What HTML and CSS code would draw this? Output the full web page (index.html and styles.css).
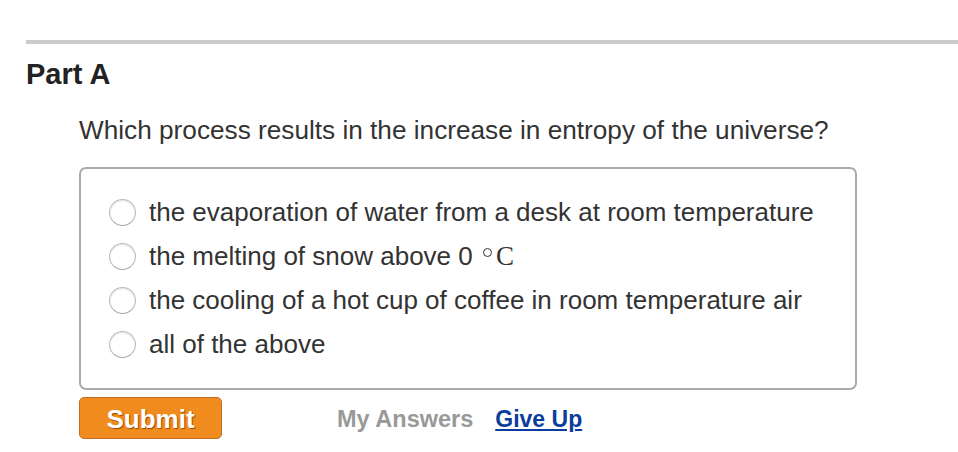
FILE: index.html
```html
<!DOCTYPE html>
<html lang="en">
  <head>
    <meta charset="UTF-8" />
    <meta name="viewport" content="width=device-width, initial-scale=1.0" />
    <title>Part A</title>
    <link rel="stylesheet" href="styles.css">
  </head>
  <body>
    <div class="part">
      <h2 class="part-title">Part A</h2>
      <div class="question">
        <p class="prompt">Which process results in the increase in entropy of the universe?</p>
        <div class="choices">
          <label class="choice"><span class="radio"></span>the evaporation of water from a desk at room temperature</label>
          <label class="choice"><span class="radio"></span><span>the melting of snow above 0 <span class="math"><span class="deg"></span>C</span></span></label>
          <label class="choice"><span class="radio"></span>the cooling of a hot cup of coffee in room temperature air</label>
          <label class="choice"><span class="radio"></span>all of the above</label>
        </div>
        <div class="actions">
          <button class="submit">Submit</button>
          <span class="my-answers">My Answers</span>
          <a class="give-up" href="#">Give Up</a>
        </div>
      </div>
    </div>
  </body>
</html>
```

FILE: styles.css
```css
body {
  margin: 0;
  font-family: "Liberation Sans", Arial, sans-serif;
  color: #333;
  background-color: #fff;
}

.part {
  margin-top: 40px;
  margin-left: 26px;
  border-top: 4px solid #ccc;
}

.part-title {
  margin: 14px 0 0;
  font-size: 29px;
  line-height: 32px;
  color: #222;
}

.question {
  padding-left: 53px;
}

.prompt {
  margin: 25px 0 0;
  font-size: 26.2px;
  line-height: 30px;
}

.choices {
  width: 778px;
  margin-top: 22px;
  padding: 21px 0 22px 28px;
  border: 2px solid #aaa;
  border-radius: 7px;
  box-sizing: border-box;
}

.choice {
  display: flex;
  align-items: center;
  height: 44px;
  font-size: 26px;
}

.radio {
  flex: none;
  width: 27px;
  height: 27px;
  margin-right: 13px;
  border: 1px solid #bbb;
  border-bottom-color: #aaa;
  border-radius: 50%;
  box-sizing: border-box;
  background-color: #fff;
  box-shadow: inset 0 1px 2px rgba(0, 0, 0, 0.12);
}

.math {
  font-family: "Liberation Serif", "Times New Roman", serif;
  font-size: 27px;
}

.deg {
  display: inline-block;
  width: 9px;
  height: 9px;
  margin: 0 4px 0 3px;
  border: 1.3px solid #333;
  border-radius: 50%;
  box-sizing: border-box;
  vertical-align: 8px;
}

.actions {
  display: flex;
  align-items: center;
  margin-top: 7px;
}

.submit {
  width: 143px;
  height: 42px;
  padding: 2px 0 0;
  font-family: "Liberation Sans", Arial, sans-serif;
  font-size: 26px;
  font-weight: bold;
  color: #fff;
  text-shadow: 1px 1px 1px #9a4800;
  background-color: #f08c1e;
  border: 1px solid #c46d26;
  border-radius: 5px;
  cursor: pointer;
}

.my-answers {
  margin-left: 115px;
  margin-top: 3px;
  font-size: 23.5px;
  font-weight: bold;
  color: #999;
}

.give-up {
  margin-left: 22px;
  margin-top: 3px;
  font-size: 23px;
  font-weight: bold;
  color: #0b3d9c;
}
```
